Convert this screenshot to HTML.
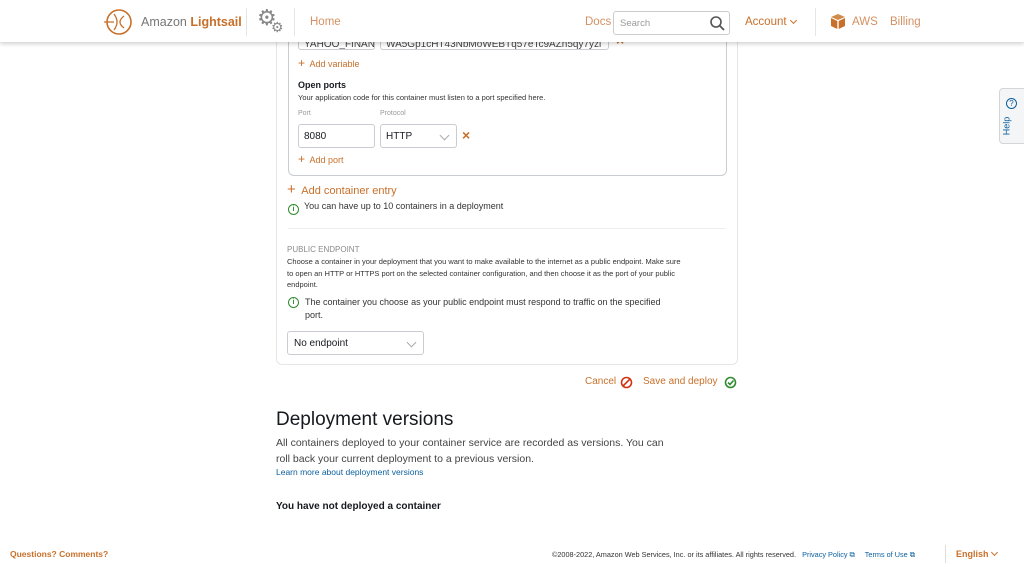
<!DOCTYPE html>
<html><head><meta charset="utf-8"><style>
*{margin:0;padding:0;box-sizing:border-box}
body{width:1024px;height:567px;overflow:hidden;background:#fff;font-family:"Liberation Sans",sans-serif;color:#16191f;position:relative}
.a{position:absolute}
.or{color:#c8702a}
.hdr{top:0;left:0;width:1024px;height:42px;background:#fff;box-shadow:0 2px 4px rgba(0,0,0,.18);z-index:5}
.inp{border:1px solid #c9ccd0;border-radius:3px;background:#fff;font-size:10px}
.sm{font-size:7.5px;color:#333;line-height:11.5px}
.chev{position:absolute;right:8px;top:7px;width:7px;height:7px;border-right:1.3px solid #aaa;border-bottom:1.3px solid #aaa;transform:rotate(45deg)}
.info{display:inline-block;width:11px;height:11px;border:1.3px solid #2e8b2e;border-radius:50%;font-size:7px;text-align:center;line-height:9px;color:#2e8b2e;font-weight:bold}
</style></head><body>
<div class="a" style="left:276px;top:20px;width:462px;height:345px;border:1px solid #e4e6e8;border-radius:6px"></div>
<div class="a" style="left:288px;top:20px;width:439px;height:156px;border:1px solid #c9ccd0;border-radius:6px"></div>
<div class="a inp" style="left:298px;top:30px;width:77px;height:20px;overflow:hidden;padding:8px 5px;color:#444">YAHOO_FINAN</div>
<div class="a inp" style="left:380px;top:30px;width:229px;height:20px;overflow:hidden;padding:8px 5px;color:#444;white-space:nowrap">WA5Gp1cHT43NbMoWEBTq57eTc9AZn5qy7yzl</div>
<div class="a or" style="left:616px;top:32px;font-size:14px;font-weight:bold">×</div>
<div class="a or" style="left:298px;top:56px;font-size:9px"><span style="font-size:12px">+</span>&nbsp; Add variable</div>
<div class="a" style="left:298px;top:80px;font-size:9px;font-weight:bold">Open ports</div>
<div class="a" style="left:298px;top:93px;font-size:7.5px;color:#333">Your application code for this container must listen to a port specified here.</div>
<div class="a" style="left:298px;top:110px;font-size:7px;color:#999">Port</div>
<div class="a" style="left:380px;top:110px;font-size:7px;color:#999">Protocol</div>
<div class="a inp" style="left:298px;top:124px;width:77px;height:24px;padding:6px 5px">8080</div>
<div class="a inp" style="left:380px;top:124px;width:77px;height:24px;padding:6px 5px">HTTP<span class="chev"></span></div>
<div class="a or" style="left:462px;top:127px;font-size:14px;font-weight:bold">×</div>
<div class="a or" style="left:298px;top:152px;font-size:9px"><span style="font-size:12px">+</span>&nbsp; Add port</div>
<div class="a or" style="left:287px;top:181px;font-size:11px"><span style="font-size:15px">+</span>&nbsp; Add container entry</div>
<div class="a" style="left:288px;top:201px;font-size:9px;color:#333"><span class="info" style="vertical-align:-2px;margin-right:5px">i</span>You can have up to 10 containers in a deployment</div>
<div class="a" style="left:288px;top:228px;width:438px;border-top:1px solid #eee"></div>
<div class="a" style="left:287px;top:245px;font-size:8px;color:#8a8a8a">PUBLIC ENDPOINT</div>
<div class="a sm" style="left:287px;top:256px;width:395px">Choose a container in your deployment that you want to make available to the internet as a public endpoint. Make sure to open an HTTP or HTTPS port on the selected container configuration, and then choose it as the port of your public endpoint.</div>
<div class="a" style="left:288px;top:296px;font-size:9px;color:#333;line-height:13px;width:385px"><span class="info" style="position:absolute;left:0;top:1px">i</span><div style="padding-left:17px">The container you choose as your public endpoint must respond to traffic on the specified port.</div></div>
<div class="a inp" style="left:287px;top:331px;width:137px;height:24px;padding:6px 6px">No endpoint<span class="chev"></span></div>
<div class="a or" style="left:585px;top:376px;font-size:10px">Cancel</div>
<svg class="a" style="left:620px;top:376px" width="13" height="13"><circle cx="6.5" cy="6.5" r="5" fill="none" stroke="#d13212" stroke-width="1.6"/><path d="M3 10 L10 3" stroke="#d13212" stroke-width="1.6"/></svg>
<div class="a or" style="left:643px;top:376px;font-size:10px">Save and deploy</div>
<svg class="a" style="left:724px;top:376px" width="13" height="13"><circle cx="6.5" cy="6.5" r="5" fill="none" stroke="#2e8b2e" stroke-width="1.6"/><path d="M4 6.5 L6 8.5 L9.5 4.5" fill="none" stroke="#2e8b2e" stroke-width="1.6"/></svg>
<div class="a" style="left:276px;top:409px;font-size:19px;color:#16191f">Deployment versions</div>
<div class="a" style="left:276px;top:435px;width:390px;font-size:10.5px;line-height:16px;color:#444">All containers deployed to your container service are recorded as versions. You can roll back your current deployment to a previous version.</div>
<div class="a" style="left:276px;top:467px;font-size:8.5px;color:#0b5f9e">Learn more about deployment versions</div>
<div class="a" style="left:276px;top:501px;font-size:10px;font-weight:bold">You have not deployed a container</div>
<div class="a" style="left:999px;top:88px;width:30px;height:56px;border:1px solid #d5d5d5;border-radius:4px;background:#f4f5f7"><div style="position:absolute;left:6px;top:9px;width:11px;height:11px;border:1.3px solid #0b5f9e;border-radius:50%;font-size:8px;color:#0b5f9e;text-align:center;line-height:9px">?</div><div style="position:absolute;left:-3px;top:32px;transform:rotate(-90deg);font-size:9px;color:#0b5f9e">Help</div></div>
<div class="a hdr">
<svg class="a" style="left:102px;top:8px" width="32" height="28" viewBox="0 0 32 28"><circle cx="17" cy="14" r="12" fill="none" stroke="#c8702a" stroke-width="1.6"/><path d="M12 6 Q18 14 12 22 M22 8 Q14 14 22 20 M2 14 H12" fill="none" stroke="#c8702a" stroke-width="1.3"/></svg>
<div class="a" style="left:141px;top:15px;font-size:12.5px;color:#777">Amazon <b style="color:#c8702a;font-weight:bold">Lightsail</b></div>
<div class="a" style="left:246px;top:8px;height:28px;border-left:1px solid #e5e5e5"></div>
<div class="a" style="left:257px;top:5px;font-size:22px;color:#888">⚙</div>
<div class="a" style="left:271px;top:19px;font-size:14px;color:#888">⚙</div>
<div class="a" style="left:294px;top:8px;height:28px;border-left:1px solid #e5e5e5"></div>
<div class="a" style="left:310px;top:16px;font-size:11.5px;color:#d49062">Home</div>
<div class="a" style="left:585px;top:16px;font-size:11.5px;color:#d49062">Docs</div>
<div class="a" style="left:613px;top:11px;width:117px;height:24px;border:1px solid #ccc;border-radius:3px"><span style="position:absolute;left:6px;top:6px;font-size:9.5px;color:#999">Search</span><svg style="position:absolute;right:4px;top:3px" width="16" height="16"><circle cx="7" cy="7" r="5" fill="none" stroke="#555" stroke-width="1.6"/><path d="M11 11 L15 15" stroke="#555" stroke-width="1.8"/></svg></div>
<div class="a" style="left:745px;top:16px;font-size:11.5px;color:#c8702a">Account</div>
<div class="a" style="left:791px;top:18px;width:5px;height:5px;border-right:1.5px solid #c8702a;border-bottom:1.5px solid #c8702a;transform:rotate(45deg)"></div>
<div class="a" style="left:815px;top:8px;height:28px;border-left:1px solid #e5e5e5"></div>
<svg class="a" style="left:830px;top:13px" width="16" height="17" viewBox="0 0 16 17"><path d="M8 1 L15 4 L8 7 L1 4Z" fill="#d08a4a"/><path d="M1 5 L7.3 8 V16 L1 13Z M15 5 L8.7 8 V16 L15 13Z" fill="#c8702a"/></svg>
<div class="a" style="left:852px;top:16px;font-size:11.5px;color:#d49062">AWS</div>
<div class="a" style="left:890px;top:16px;font-size:11.5px;color:#d49062">Billing</div>
</div>
<div class="a" style="left:10px;top:549px;font-size:8.5px;font-weight:bold;color:#c8702a">Questions? Comments?</div>
<div class="a" style="left:552px;top:550px;font-size:7.3px;color:#333;white-space:nowrap">©2008-2022, Amazon Web Services, Inc. or its affiliates. All rights reserved. &nbsp;&nbsp;<span style="color:#0b5f9e">Privacy Policy ⧉ &nbsp;&nbsp;&nbsp; Terms of Use ⧉</span></div>
<div class="a" style="left:945px;top:545px;height:18px;border-left:1px solid #ddd"></div>
<div class="a" style="left:956px;top:549px;font-size:9px;font-weight:bold;color:#c8702a">English</div>
<div class="a" style="left:992px;top:550px;width:5px;height:5px;border-right:1.5px solid #c8702a;border-bottom:1.5px solid #c8702a;transform:rotate(45deg)"></div>
</body></html>
